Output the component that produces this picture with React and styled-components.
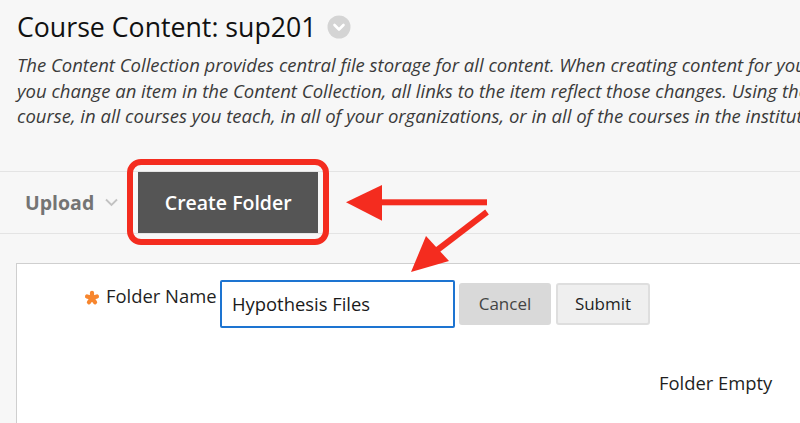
import React from "react";
import styled, { createGlobalStyle } from "styled-components";

const GlobalStyle = createGlobalStyle`
  html, body {
    margin: 0;
    padding: 0;
    background: #f7f7f7;
    font-family: "Open Sans", "Noto Sans", sans-serif;
    overflow: hidden;
  }
`;

const Page = styled.div`
  position: relative;
  width: 800px;
  height: 423px;
  overflow: hidden;
  background: #f7f7f7;
`;

const Header = styled.div`
  padding: 9px 0 0 17px;
`;

const TitleRow = styled.div`
  display: flex;
  align-items: center;
  gap: 10px;
`;

const Title = styled.h1`
  margin: 0;
  font-size: 26.7px;
  line-height: 36px;
  font-weight: 400;
  color: #111;
`;

const Description = styled.div`
  margin-top: 7px;
  font-size: 18.5px;
  line-height: 25.5px;
  font-style: italic;
  color: #3b3b3b;
  white-space: nowrap;
`;

const Toolbar = styled.div`
  margin-top: 42px;
  height: 61px;
  border-top: 1px solid #e4e4e4;
  border-bottom: 1px solid #e4e4e4;
  display: flex;
  align-items: stretch;
  padding-left: 25px;
`;

const MenuLabel = styled.div`
  display: flex;
  align-items: center;
  gap: 11px;
  font-size: 19.5px;
  font-weight: 700;
  color: #747474;
  margin-right: 20px;
`;

const Highlight = styled.div`
  position: relative;
  display: flex;
  &::after {
    content: "";
    position: absolute;
    inset: -13px -11px -12px -11px;
    border: 6px solid #f42c1f;
    border-radius: 14px;
    pointer-events: none;
  }
`;

const DarkButton = styled.button`
  width: 180px;
  border: none;
  background: #555555;
  color: #fff;
  font-family: inherit;
  font-size: 19.5px;
  font-weight: 600;
  padding: 0;
`;

const Panel = styled.div`
  margin: 29px 0 0 16px;
  height: 200px;
  background: #fff;
  border: 1px solid #cfcfcf;
  border-right: none;
  padding: 16px 0 0 67px;
`;

const FormRow = styled.div`
  display: flex;
  align-items: flex-start;
`;

const Required = styled.span`
  display: flex;
  margin-top: 10px;
  width: 22px;
`;

const Label = styled.label`
  font-size: 18.4px;
  line-height: 24px;
  color: #1f1f1f;
  margin-top: 4px;
  width: 114px;
  white-space: nowrap;
`;

const TextInput = styled.div`
  box-sizing: border-box;
  width: 235px;
  height: 48px;
  border: 2px solid #1d74d1;
  border-radius: 2px;
  padding: 0 10px;
  display: flex;
  align-items: center;
  font-size: 18.4px;
  color: #1a1a1a;
  background: #fff;
`;

const FormButton = styled.button`
  box-sizing: border-box;
  margin: 3px 0 0 ${(p) => p.$gap}px;
  width: ${(p) => p.$width}px;
  height: 42px;
  border-radius: 3px;
  border: 2px solid ${(p) => (p.$primary ? "#dedede" : "#d9d9d9")};
  background: ${(p) => (p.$primary ? "#efefef" : "#d9d9d9")};
  color: ${(p) => (p.$primary ? "#1f1f1f" : "#444")};
  font-family: inherit;
  font-size: 17px;
  padding: 0;
`;

const EmptyNote = styled.div`
  margin: 42px 0 0 575px;
  font-size: 18.4px;
  color: #1f1f1f;
`;

const Annotation = styled.svg`
  position: absolute;
  left: 0;
  top: 0;
  pointer-events: none;
`;

const SettingsIcon = () => (
  <svg width="24" height="24" viewBox="0 0 24 24">
    <circle cx="12" cy="12" r="11.5" fill="#d4d4d4" />
    <path d="M7.5 10 L12 14.5 L16.5 10" fill="none" stroke="#fff" strokeWidth="2.6" strokeLinecap="round" strokeLinejoin="round" />
  </svg>
);

const Chevron = () => (
  <svg width="13" height="9" viewBox="0 0 13 9">
    <path d="M1 1.5 L6.5 7 L12 1.5" fill="none" stroke="#c2c2c2" strokeWidth="1.8" />
  </svg>
);

const RequiredStar = () => {
  const arms = [-90, -18, 54, 126, 198].map((a) => {
    const r = (a * Math.PI) / 180;
    return `M8 8 L${8 + 5.2 * Math.cos(r)} ${8 + 5.2 * Math.sin(r)}`;
  });
  return (
    <svg width="16" height="16" viewBox="0 0 16 16">
      <path d={arms.join(" ")} stroke="#f7862e" strokeWidth="4.2" strokeLinecap="round" fill="none" />
    </svg>
  );
};

export default function App() {
  return (
    <Page>
      <GlobalStyle />
      <Header>
        <TitleRow>
          <Title>Course Content: sup201</Title>
          <SettingsIcon />
        </TitleRow>
        <Description>
          <div>The Content Collection provides central file storage for all content. When creating content for your course, you can link to items.</div>
          <div>you change an item in the Content Collection, all links to the item reflect those changes. Using the Content Collection, you can share</div>
          <div>course, in all courses you teach, in all of your organizations, or in all of the courses in the institution.</div>
        </Description>
      </Header>
      <Toolbar>
        <MenuLabel>
          Upload <Chevron />
        </MenuLabel>
        <Highlight>
          <DarkButton>Create Folder</DarkButton>
        </Highlight>
      </Toolbar>
      <Panel>
        <FormRow>
          <Required>
            <RequiredStar />
          </Required>
          <Label>Folder Name</Label>
          <TextInput>Hypothesis Files</TextInput>
          <FormButton $gap={4} $width={92}>Cancel</FormButton>
          <FormButton $gap={5} $width={94} $primary>Submit</FormButton>
        </FormRow>
        <EmptyNote>Folder Empty</EmptyNote>
      </Panel>
      <Annotation width="800" height="423" viewBox="0 0 800 423">
        <rect x="380" y="199.3" width="107" height="6" fill="#f42c1f" />
        <polygon points="346,202.3 382,185 382,220.7" fill="#f42c1f" />
        <line x1="487" y1="212" x2="436" y2="251" stroke="#f42c1f" strokeWidth="6" />
        <polygon points="411,272 426,236 449,261" fill="#f42c1f" />
      </Annotation>
    </Page>
  );
}
